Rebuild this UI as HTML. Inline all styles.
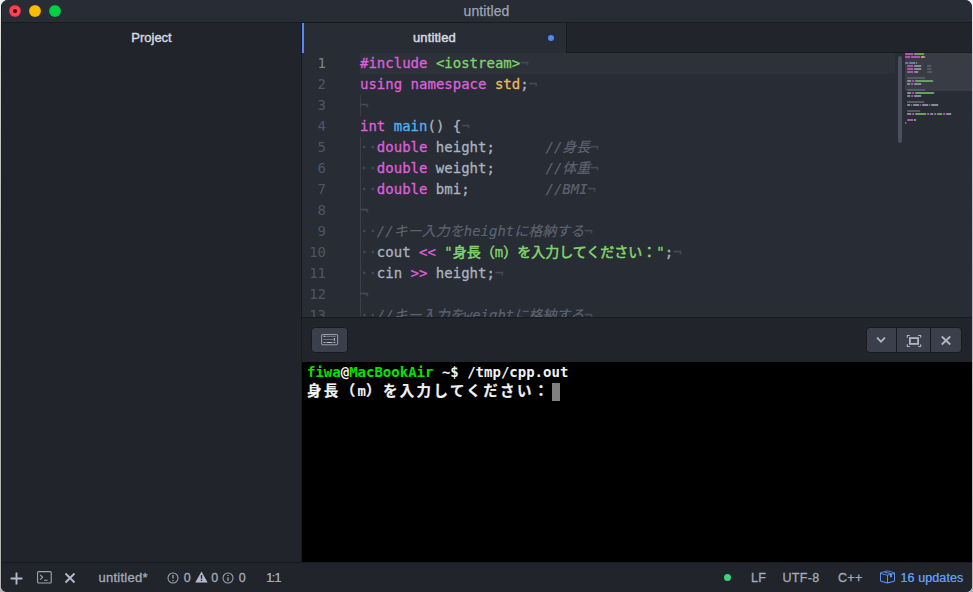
<!DOCTYPE html>
<html lang="ja">
<head>
<meta charset="utf-8">
<title>untitled</title>
<style>
*{box-sizing:border-box;margin:0;padding:0}
html,body{width:973px;height:592px;overflow:hidden;background:#b6b6b5}
body{background:linear-gradient(#f0f0f0 0,#d0d0cf 60px,#b9b9b7 250px,#b6b6b5 592px)}
body{font-family:"Liberation Sans","Noto Sans CJK JP",sans-serif;font-size:13px;color:#9da5b4;position:relative}
.abs{position:absolute}
#win{position:absolute;left:1px;top:0;width:971px;height:592px;background:#21252b;border-radius:7px 7px 6px 6px;overflow:hidden}
#titlebar{position:absolute;left:0;top:0;width:971px;height:22px;background:#282c34}
#titlebar .t{position:absolute;left:0;width:971px;top:3px;text-align:center;font-size:14px;color:#9da5b4;letter-spacing:.1px;-webkit-text-stroke-width:.25px}
.tl{position:absolute;top:5px;width:12px;height:12px;border-radius:50%;box-shadow:inset 0 0 0 .5px rgba(0,0,0,.18)}
#tsep{position:absolute;left:0;top:22px;width:971px;height:1px;background:#181a1f}
#left{position:absolute;left:0;top:23px;width:300px;height:540px;background:#21252b}
#left .hd{position:absolute;left:0;top:0;width:301px;height:30px;text-align:center;line-height:29px;font-size:13px;color:#d7dae0;-webkit-text-stroke:.4px #d7dae0}
#vsep{position:absolute;left:300px;top:23px;width:1px;height:540px;background:#181a1f}
#tabbar{position:absolute;left:301px;top:23px;width:670px;height:30px;background:#21252b}
#tab{position:absolute;left:0;top:0;width:265px;height:30px;background:#282c34;border-left:2px solid #568af2;border-right:1px solid #181a1f}
#tab .n{position:absolute;left:-.6px;width:262px;text-align:center;top:0;line-height:29px;font-size:13px;color:#d7dae0;-webkit-text-stroke:.45px #d7dae0;letter-spacing:.12px}
#tab .dot{position:absolute;left:243.8px;top:11.8px;width:6.5px;height:6.5px;border-radius:50%;background:#4d88ff}
#editor{position:absolute;left:301px;top:53px;width:670px;height:264px;background:#282c34;overflow:hidden;font-family:"DejaVu Sans Mono","Liberation Mono","Noto Sans CJK JP",monospace;font-size:14px}
.ln{position:absolute;left:0;width:669px;height:21px;line-height:21px;white-space:pre}
.ln .no{position:absolute;left:0;width:24px;text-align:right;color:#4e5568}
.ln .cd{position:absolute;left:58px;top:0;color:#abb2bf;height:21px;-webkit-text-stroke-width:.3px}
.cur:before{content:"";position:absolute;left:58px;top:0;width:535px;height:21px;background:#2c313a}
.cur .no{color:#7d8390}
.k{color:#dd5fdc}.s{color:#80d36a}.o{color:#f0b95a}.f{color:#4fb0f5}.c{color:#5c6370;font-style:italic;-webkit-text-stroke-width:.15px}.i{color:#454a56}
.g{box-shadow:inset 1px 0 0 #3b4048}
#term{position:absolute;left:301px;top:317px;width:670px;height:246px;background:#21252b}
#termtop{position:absolute;left:0;top:0;width:670px;height:1px;background:#181a1f}
#xterm{position:absolute;left:0;top:45px;width:669px;height:201px;background:#000;font-family:"DejaVu Sans Mono","Liberation Mono","Noto Sans CJK JP",monospace;font-size:14px;font-weight:bold;color:#f2f2f2;white-space:pre}
.w{font-size:14.5px;letter-spacing:2.36px;-webkit-text-stroke-width:.2px}
.j{-webkit-text-stroke-width:.55px}
.btn{position:absolute;background:#3a3f4b;border:1px solid #181a1f}
#status{position:absolute;left:0;top:562px;width:971px;height:30px;background:#21252b;border-top:1px solid #181a1f;font-size:13px;color:#a4aab9}
#status span.ns{-webkit-text-stroke-width:0;text-shadow:0 0 .6px currentColor}
#status span{position:absolute;top:0;line-height:30px;white-space:nowrap;-webkit-text-stroke-width:.3px;font-size:12.5px;letter-spacing:.3px}
</style>
</head>
<body>
<div id="win">
  <div id="titlebar">
    <div class="tl" style="left:8px;background:radial-gradient(circle,#ff4256 50%,#e6233c 100%)"></div>
    <div class="tl" style="left:12px;top:9px;width:4px;height:4px;background:#4d0000"></div>
    <div class="tl" style="left:28px;background:#fdbc03"></div>
    <div class="tl" style="left:48px;background:#03d045"></div>
    <div class="t">untitled</div>
  </div>
  <div id="tsep"></div>
  <div class="abs" style="left:0;top:5px;width:1px;height:583px;background:#1b1e26;z-index:5"></div>
  <div id="left"><div class="hd">Project</div></div>
  <div id="vsep"></div>
  <div id="tabbar">
    <div id="tab"><div class="n">untitled</div><div class="dot"></div></div>
    <div class="abs" style="left:265px;top:29px;width:405px;height:1px;background:#181a1f"></div>
  </div>
  <div id="editor">
    <div class="ln cur" style="top:0"><span class="no">1</span><span class="cd"><span class="k">#include</span> <span class="s">&lt;iostream&gt;</span><span class="i">¬</span></span></div>
    <div class="ln" style="top:21px"><span class="no">2</span><span class="cd"><span class="k">using</span> <span class="k">namespace</span> <span class="o">std</span>;<span class="i">¬</span></span></div>
    <div class="ln" style="top:42px"><span class="no">3</span><span class="cd g"><span class="i">¬</span></span></div>
    <div class="ln" style="top:63px"><span class="no">4</span><span class="cd"><span class="k">int</span> <span class="f">main</span>() {<span class="i">¬</span></span></div>
    <div class="ln" style="top:84px"><span class="no">5</span><span class="cd g"><span class="i">··</span><span class="k">double</span> height;      <span class="c">//身長</span><span class="i">¬</span></span></div>
    <div class="ln" style="top:105px"><span class="no">6</span><span class="cd g"><span class="i">··</span><span class="k">double</span> weight;      <span class="c">//体重</span><span class="i">¬</span></span></div>
    <div class="ln" style="top:126px"><span class="no">7</span><span class="cd g"><span class="i">··</span><span class="k">double</span> bmi;         <span class="c">//BMI</span><span class="i">¬</span></span></div>
    <div class="ln" style="top:147px"><span class="no">8</span><span class="cd g"><span class="i">¬</span></span></div>
    <div class="ln" style="top:168px"><span class="no">9</span><span class="cd g"><span class="i">··</span><span class="c">//キー入力をheightに格納する</span><span class="i">¬</span></span></div>
    <div class="ln" style="top:189px"><span class="no">10</span><span class="cd g"><span class="i">··</span>cout <span class="k">&lt;&lt;</span> <span class="s">"<span class="j">身長（</span>m<span class="j">）を入力してください：</span>"</span>;<span class="i">¬</span></span></div>
    <div class="ln" style="top:210px"><span class="no">11</span><span class="cd g"><span class="i">··</span>cin <span class="k">&gt;&gt;</span> height;<span class="i">¬</span></span></div>
    <div class="ln" style="top:231px"><span class="no">12</span><span class="cd g"><span class="i">¬</span></span></div>
    <div class="ln" style="top:252px"><span class="no">13</span><span class="cd g"><span class="i">··</span><span class="c">//キー入力をweightに格納する</span><span class="i">¬</span></span></div>
    <svg class="abs" style="left:603px;top:0" width="67" height="264" viewBox="0 0 67 264"><rect x="0" y="0" width="67" height="38" fill="#393c45"/><rect x="0.2" y="0" width="8" height="2" fill="#a957ad"/><rect x="9.2" y="0" width="10" height="2" fill="#6a9f5e"/><rect x="0.2" y="3" width="5" height="2" fill="#a957ad"/><rect x="6.2" y="3" width="9" height="2" fill="#a957ad"/><rect x="16.2" y="3" width="3" height="2" fill="#c8a055"/><rect x="19.2" y="3" width="1" height="2" fill="#858a97"/><rect x="0.2" y="9" width="3" height="2" fill="#a957ad"/><rect x="4.2" y="9" width="4" height="2" fill="#468cbe"/><rect x="8.2" y="9" width="2" height="2" fill="#858a97"/><rect x="11.2" y="9" width="1" height="2" fill="#858a97"/><rect x="2.2" y="12" width="6" height="2" fill="#a957ad"/><rect x="9.2" y="12" width="7" height="2" fill="#858a97"/><rect x="22.2" y="12" width="4" height="2" fill="#565a65"/><rect x="2.2" y="15" width="6" height="2" fill="#a957ad"/><rect x="9.2" y="15" width="7" height="2" fill="#858a97"/><rect x="22.2" y="15" width="4" height="2" fill="#565a65"/><rect x="2.2" y="18" width="6" height="2" fill="#a957ad"/><rect x="9.2" y="18" width="4" height="2" fill="#858a97"/><rect x="22.2" y="18" width="5" height="2" fill="#565a65"/><rect x="2.2" y="24" width="18" height="2" fill="#565a65"/><rect x="2.2" y="27" width="4" height="2" fill="#858a97"/><rect x="7.2" y="27" width="2" height="2" fill="#a957ad"/><rect x="10.2" y="27" width="17" height="2" fill="#6a9f5e"/><rect x="27.2" y="27" width="1" height="2" fill="#858a97"/><rect x="2.2" y="30" width="3" height="2" fill="#858a97"/><rect x="6.2" y="30" width="2" height="2" fill="#a957ad"/><rect x="9.2" y="30" width="7" height="2" fill="#858a97"/><rect x="2.2" y="36" width="18" height="2" fill="#565a65"/><rect x="2.2" y="39" width="4" height="2" fill="#858a97"/><rect x="7.2" y="39" width="2" height="2" fill="#a957ad"/><rect x="10.2" y="39" width="18" height="2" fill="#6a9f5e"/><rect x="28.2" y="39" width="1" height="2" fill="#858a97"/><rect x="2.2" y="42" width="3" height="2" fill="#858a97"/><rect x="6.2" y="42" width="2" height="2" fill="#a957ad"/><rect x="9.2" y="42" width="7" height="2" fill="#858a97"/><rect x="2.2" y="48" width="17" height="2" fill="#565a65"/><rect x="2.2" y="51" width="3" height="2" fill="#858a97"/><rect x="6.2" y="51" width="1" height="2" fill="#a957ad"/><rect x="8.2" y="51" width="6" height="2" fill="#858a97"/><rect x="15.2" y="51" width="1" height="2" fill="#a957ad"/><rect x="17.2" y="51" width="6" height="2" fill="#858a97"/><rect x="24.2" y="51" width="1" height="2" fill="#a957ad"/><rect x="26.2" y="51" width="7" height="2" fill="#858a97"/><rect x="2.2" y="57" width="13" height="2" fill="#565a65"/><rect x="2.2" y="60" width="4" height="2" fill="#858a97"/><rect x="7.2" y="60" width="2" height="2" fill="#a957ad"/><rect x="10.2" y="60" width="11" height="2" fill="#6a9f5e"/><rect x="22.2" y="60" width="2" height="2" fill="#a957ad"/><rect x="25.2" y="60" width="3" height="2" fill="#858a97"/><rect x="29.2" y="60" width="2" height="2" fill="#a957ad"/><rect x="32.2" y="60" width="5" height="2" fill="#6a9f5e"/><rect x="38.2" y="60" width="2" height="2" fill="#a957ad"/><rect x="41.2" y="60" width="5" height="2" fill="#858a97"/><rect x="2.2" y="66" width="6" height="2" fill="#a957ad"/><rect x="9.2" y="66" width="1" height="2" fill="#c8a055"/><rect x="10.2" y="66" width="1" height="2" fill="#858a97"/><rect x="0.2" y="69" width="1" height="2" fill="#858a97"/></svg>
    <div class="abs" style="left:596px;top:3px;width:4px;height:87px;border-radius:2px;background:#4a5060"></div>
  </div>
  <div id="term">
    <div id="termtop"></div>
    <div class="btn" style="left:9px;top:10px;width:37px;height:26px;border-radius:4px">
      <svg class="abs" style="left:8px;top:5px" width="19" height="13" viewBox="0 0 19 13"><rect x="1.6" y="1.4" width="16" height="10.3" rx="1.4" fill="#343843" stroke="#969cac" stroke-width="1.05"/><path d="M3.1 3.4h12.8M3.1 6.45h10M3.1 9.5h12.8" stroke="#6c7180" stroke-width="1.1" fill="none"/><path d="M3.9 3.4h1.1M3.9 9.5h1.1M6.8 9.5h5.1M13.8 9.5h1.2" stroke="#b4b9c6" stroke-width="1.1" fill="none"/><path d="M14.4 5v2.9" stroke="#a9aebc" stroke-width="1.3"/></svg>
    </div>
    <div class="btn" style="left:564px;top:10px;width:31px;height:26px;border-radius:4px 0 0 4px">
      <svg class="abs" style="left:8px;top:7px" width="12" height="10" viewBox="0 0 12 10"><path d="M2 2.6L6 6.6L10 2.6" fill="none" stroke="#afb4c3" stroke-width="1.9"/></svg>
    </div>
    <div class="btn" style="left:594px;top:10px;width:35px;height:26px;border-left:1px solid #181a1f">
      <svg class="abs" style="left:9px;top:6px" width="16" height="14" viewBox="0 0 16 14"><rect x="3.9" y="4.1" width="8.2" height="5.8" fill="none" stroke="#afb4c3" stroke-width="1.8"/><path d="M1.3 3.8V1.5h2.6M12.1 1.5h2.6v2.3M14.7 10.2v2.3h-2.6M3.9 12.5H1.3v-2.3" fill="none" stroke="#afb4c3" stroke-width="1.1"/></svg>
    </div>
    <div class="btn" style="left:628px;top:10px;width:32px;height:26px;border-radius:0 4px 4px 0">
      <svg class="abs" style="left:9px;top:6.5px" width="12" height="11" viewBox="0 0 12 11"><path d="M1.8 1.5L10.2 9.5M10.2 1.5L1.8 9.5" fill="none" stroke="#afb4c3" stroke-width="1.9"/></svg>
    </div>
    <div id="xterm" style="width:670px"><div class="abs" style="left:5px;top:0;line-height:20px"><span style="color:#00e400">fiwa</span>@<span style="color:#00e400">MacBookAir</span> ~$ /tmp/cpp.out</div><div class="abs" style="left:5px;top:19px;line-height:20px;height:20px"><span class="w">身長（</span>m<span class="w">）を入力してください：</span></div><div class="abs" style="left:250px;top:20.5px;width:7.5px;height:18.5px;background:#808080"></div></div>
  </div>
  <div id="status">
    <svg class="abs" style="left:9.4px;top:8.5px" width="13" height="13" viewBox="0 0 13 13"><path d="M6.5 .6v11.8M.6 6.5h11.8" stroke="#b4bacb" stroke-width="1.9" fill="none"/></svg>
    <svg class="abs" style="left:36px;top:8.4px" width="15" height="13" viewBox="0 0 15 13"><rect x=".6" y=".6" width="13.6" height="11.4" rx="1" fill="none" stroke="#9da5b4" stroke-width="1.1"/><path d="M3.2 3.9L5.6 6.3L3.2 8.7M7 9.3H10.6" fill="none" stroke="#9da5b4" stroke-width="1.1"/></svg>
    <svg class="abs" style="left:63px;top:9px" width="12" height="12" viewBox="0 0 12 12"><path d="M1.5 1.5L10.5 10.5M10.5 1.5L1.5 10.5" stroke="#b4bacb" stroke-width="1.9" fill="none"/></svg>
    <span class="b" style="left:97.5px;font-size:13px;letter-spacing:.25px">untitled*</span>
    <svg class="abs" style="left:166px;top:8.5px" width="12" height="12" viewBox="0 0 12 12"><circle cx="6" cy="6" r="5" fill="none" stroke="#9da5b4" stroke-width="1.05"/><path d="M6 3v3.6M6 8v1.2" stroke="#9da5b4" stroke-width="1.3"/></svg>
    <span class="b" style="left:182.8px">0</span>
    <svg class="abs" style="left:193.5px;top:8.3px" width="13" height="12" viewBox="0 0 13 12"><path d="M6.5 .5L12.7 11.4H.3Z" fill="#b4bacb"/><path d="M6.5 4v3.8M6.5 8.8v1.3" stroke="#21252b" stroke-width="1.4"/></svg>
    <span class="b" style="left:210.2px">0</span>
    <svg class="abs" style="left:221px;top:8.5px" width="12" height="12" viewBox="0 0 12 12"><circle cx="6" cy="6" r="5" fill="none" stroke="#9da5b4" stroke-width="1.05"/><path d="M6 5.2v3.8M6 2.9v1.2" stroke="#9da5b4" stroke-width="1.3"/></svg>
    <span class="b" style="left:237.8px">0</span>
    <span class="b ns" style="left:265.2px;font-size:12.5px;letter-spacing:0"><i style="font-style:normal;letter-spacing:-1.3px">1</i><i style="font-style:normal;letter-spacing:-.9px">:</i>1</span>
    <div class="abs" style="left:722.6px;top:11.4px;width:7px;height:7px;border-radius:50%;background:#3ed27c"></div>
    <span class="b" style="left:750px">LF</span>
    <span class="b" style="left:781.5px">UTF-8</span>
    <span class="b" style="left:837px">C++</span>
    <svg class="abs" style="left:877.9px;top:5.6px" width="17" height="16" viewBox="0 0 17 16"><path fill="#5a90f0" fill-rule="evenodd" d="M1 4.27v7.47c0 .45.3.84.75.97l6.5 1.73c.16.05.34.05.5 0l6.500-1.730c.45-.13.75-.52.75-.97V4.270c0-.45-.3-.84-.75-.97l-6.500-1.740a1.400 1.400 0 0 0-.5 0L1.750 3.300c-.45.13-.75.52-.75.97zm7 9.090l-6-1.590V5l6 1.610v6.750zM2 4l2.500-.67L11 5.060l-2.500.67L2 4zm13 7.770l-6 1.590V6.610l2-.53v2.420l2-.53V5.550l2-.55v6.770zm-2-7.240L6.500 2.800l2-.53L15 4l-2 .53z"/></svg>
    <span class="b ns" style="left:899.5px;color:#6398f5;font-size:12.5px;letter-spacing:.1px">16 updates</span>
  </div>
</div>
</body>
</html>
